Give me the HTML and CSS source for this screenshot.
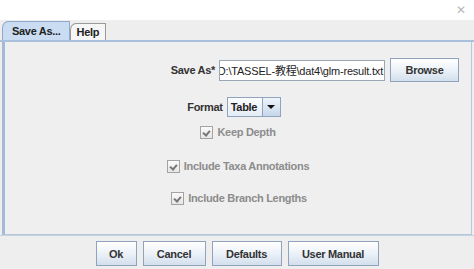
FILE: index.html
```html
<!DOCTYPE html>
<html lang="en">
<head>
  <meta charset="UTF-8" />
  <title>Save As</title>
  <link rel="stylesheet" href="styles.css">
</head>
<body>
  <div class="titlebar"><span class="close">&#x2715;</span></div>

  <div class="tabs">
    <div class="tab active">Save As...</div>
    <div class="tab">Help</div>
  </div>

  <section class="panel">
    <div class="row row-file">
      <span class="label">Save As*</span>
      <div class="field"><span>D:\TASSEL-教程\dat4\glm-result.txt</span></div>
      <button class="btn btn-browse">Browse</button>
    </div>

    <div class="row row-format">
      <span class="label">Format</span>
      <div class="combo">
        <span class="combo-value">Table</span>
        <span class="combo-arrow"></span>
      </div>
    </div>

    <label class="row check check-depth"><span class="box"></span>Keep Depth</label>
    <label class="row check check-taxa"><span class="box"></span>Include Taxa Annotations</label>
    <label class="row check check-branch"><span class="box"></span>Include Branch Lengths</label>
  </section>

  <footer class="actions">
    <button class="btn btn-ok">Ok</button>
    <button class="btn btn-cancel">Cancel</button>
    <button class="btn btn-defaults">Defaults</button>
    <button class="btn btn-manual">User Manual</button>
  </footer>
</body>
</html>
```

FILE: styles.css
```css
body {
  margin: 0;
  width: 474px;
  height: 269px;
  overflow: hidden;
  background: #eeeeee;
  font-family: "Liberation Sans", Arial, sans-serif;
  font-size: 11px;
  font-weight: bold;
  letter-spacing: -0.3px;
  color: #333;
}
.titlebar {
  height: 20px;
  background: #fff;
  display: flex;
  justify-content: flex-end;
  align-items: center;
  padding-right: 8px;
}
.close {
  color: #b8b8b8;
  font-weight: normal;
  font-size: 12px;
}
.tabs {
  height: 20px;
  display: flex;
  align-items: flex-end;
  padding-left: 2px;
  border-bottom: 2px solid #a9bfdb;
}
.tab {
  height: 16px;
  padding: 0 6px;
  display: flex;
  align-items: center;
  background: #f6f6f6;
  border: 1px solid #9a9a9a;
  border-bottom: none;
  border-top-left-radius: 6px 7px;
  margin-right: 1px;
  color: #222;
}
.tab.active {
  height: 18px;
  padding: 0 8px 0 9px;
  background: #c9dcf1;
  border-color: #8ea9cb;
  margin-right: 0;
}
.panel {
  height: 176px;
  margin: 0 2px;
  padding-top: 16px;
  border: 1px solid #b7c8de;
  border-left: 3px solid #a4bad6;
  border-top: none;
  display: flex;
  flex-direction: column;
  background: #efefef;
}
.row {
  display: flex;
  align-items: center;
  justify-content: center;
}
.row-file {
  justify-content: flex-end;
  padding-right: 12px;
  height: 24px;
}
.label {
  margin-right: 4px;
  color: #333;
}
.field {
  width: 163px;
  height: 19px;
  background: #fff;
  border: 1px solid #9aa7b6;
  display: flex;
  justify-content: flex-end;
  align-items: center;
  overflow: hidden;
  white-space: nowrap;
  font-weight: normal;
  letter-spacing: -0.2px;
  color: #222;
  margin-right: 5px;
  padding-right: 1px;
}
.field span {
  font-family: "Liberation Sans", "Noto Sans CJK SC", sans-serif;
}
.btn {
  font-family: "Liberation Sans", Arial, sans-serif;
  font-size: 11px;
  font-weight: bold;
  letter-spacing: -0.3px;
  color: #333;
  height: 25px;
  padding: 0;
  border: 1px solid #8fa3bc;
  background: linear-gradient(#ffffff, #eef3f9 45%, #d3dfed);
}
.btn-browse { width: 69px; height: 24px; }
.row-format {
  margin-top: 16px;
  height: 18px;
  padding-right: 8px;
}
.combo {
  display: flex;
  height: 18px;
  border: 1px solid #8fa3bc;
}
.combo-value {
  width: 31px;
  padding-left: 3px;
  display: flex;
  align-items: center;
  background: linear-gradient(#fbfcfe, #e4ecf5);
  border-right: 1px solid #8fa3bc;
  color: #222;
}
.combo-arrow {
  width: 17px;
  display: flex;
  align-items: center;
  justify-content: center;
  background: linear-gradient(#eef4fb, #c6d7ea);
}
.combo-arrow::before {
  content: "";
  border-left: 4px solid transparent;
  border-right: 4px solid transparent;
  border-top: 4px solid #111;
}
.check {
  height: 14px;
  color: #8c8c8c;
}
.check-depth { margin-top: 9px; }
.check-taxa { margin-top: 20px; }
.check-branch { margin-top: 18px; padding-left: 2px; }
.box {
  width: 11px;
  height: 11px;
  margin-right: 4px;
  border: 1px solid #a3a3a3;
  background: linear-gradient(#fafafa, #e6e6e6);
  position: relative;
}
.box::after {
  content: "";
  position: absolute;
  left: 3px;
  top: 2px;
  width: 3px;
  height: 5px;
  border-right: 2px solid #777;
  border-bottom: 2px solid #777;
  transform: rotate(40deg);
}
.actions {
  display: flex;
  justify-content: center;
  gap: 6px;
  padding-top: 5px;
  border-top: 1px solid #c5d2e2;
}
.btn-ok { width: 41px; }
.btn-cancel { width: 63px; }
.btn-defaults { width: 70px; }
.btn-manual { width: 91px; }
```
